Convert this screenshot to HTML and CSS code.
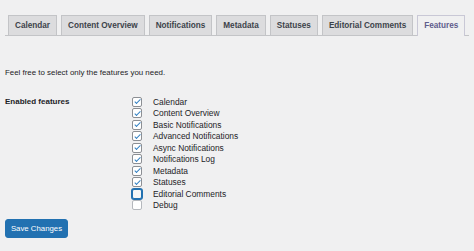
FILE: index.html
```html
<!DOCTYPE html>
<html>
<head>
<meta charset="utf-8">
<link rel="stylesheet" href="styles.css">
</head>
<body>
<div class="wrap">
  <nav class="tabs">
    <a class="tab">Calendar</a>
    <a class="tab">Content Overview</a>
    <a class="tab">Notifications</a>
    <a class="tab">Metadata</a>
    <a class="tab">Statuses</a>
    <a class="tab">Editorial Comments</a>
    <a class="tab active">Features</a>
  </nav>
  <p class="intro">Feel free to select only the features you need.</p>
  <div class="form">
    <div class="th">Enabled features</div>
    <div class="list">
      <label class="row"><input type="checkbox" checked><span>Calendar</span></label>
      <label class="row"><input type="checkbox" checked><span>Content Overview</span></label>
      <label class="row"><input type="checkbox" checked><span>Basic Notifications</span></label>
      <label class="row"><input type="checkbox" checked><span>Advanced Notifications</span></label>
      <label class="row"><input type="checkbox" checked><span>Async Notifications</span></label>
      <label class="row"><input type="checkbox" checked><span>Notifications Log</span></label>
      <label class="row"><input type="checkbox" checked><span>Metadata</span></label>
      <label class="row"><input type="checkbox" checked><span>Statuses</span></label>
      <label class="row"><input type="checkbox" class="focus"><span>Editorial Comments</span></label>
      <label class="row"><input type="checkbox"><span>Debug</span></label>
    </div>
  </div>
  <button class="btn">Save Changes</button>
</div>
</body>
</html>
```
FILE: styles.css
```css
html, body {
  margin: 0;
  padding: 0;
  background: #f0f0f1;
}
body {
  font-family: "Liberation Sans", Arial, sans-serif;
  color: #1d2327;
  width: 474px;
  height: 251px;
  overflow: hidden;
}
.wrap {
  padding: 0 5px;
}
.tabs {
  display: flex;
  gap: 4px;
  padding: 15px 0 0 3px;
  border-bottom: 1px solid #c3c4c7;
  height: 20px;
}
.tab {
  display: block;
  height: 19px;
  line-height: 19px;
  padding: 0 6px;
  border: 1px solid #c3c4c7;
  border-bottom: none;
  background: #dcdcde;
  color: #3c434a;
  font-size: 8.2px;
  font-weight: bold;
  white-space: nowrap;
}
.tab.active {
  background: #f0f0f1;
  height: 20px;
  color: #5f5d8c;
  border-color: #c9c8d6;
}
.intro {
  margin: 31px 0 0;
  font-size: 7.9px;
  line-height: 12px;
}
.form {
  display: grid;
  grid-template-columns: 127px 1fr;
  margin-top: 17px;
}
.th {
  font-size: 8px;
  font-weight: bold;
  line-height: 12px;
}
.list {
  display: flex;
  flex-direction: column;
}
.row {
  display: flex;
  align-items: center;
  height: 11.5px;
  font-size: 8.4px;
}
.row input {
  -webkit-appearance: none;
  appearance: none;
  position: relative;
  width: 10px;
  height: 10px;
  margin: 0 11px 0 0;
  border: 1px solid #8c8f94;
  border-radius: 2px;
  background: #fff;
  box-sizing: border-box;
}
.row input:checked::before {
  content: "";
  position: absolute;
  left: 2.6px;
  top: 0.6px;
  width: 2.4px;
  height: 5px;
  border-right: 1.4px solid #3582c4;
  border-bottom: 1.4px solid #3582c4;
  transform: rotate(45deg);
}
.row input.focus {
  border-color: #2271b1;
  box-shadow: 0 0 0 1px #2271b1;
  background: #f6f7f7;
}
.row input:not(:checked):not(.focus) {
  border-color: #b5b8bd;
}
.btn {
  display: block;
  margin-top: 8px;
  width: 63px;
  height: 19px;
  padding: 0;
  border: 1px solid #2271b1;
  border-radius: 3px;
  background: #2271b1;
  color: #fff;
  font-family: "Liberation Sans", Arial, sans-serif;
  font-size: 7.8px;
}
```
